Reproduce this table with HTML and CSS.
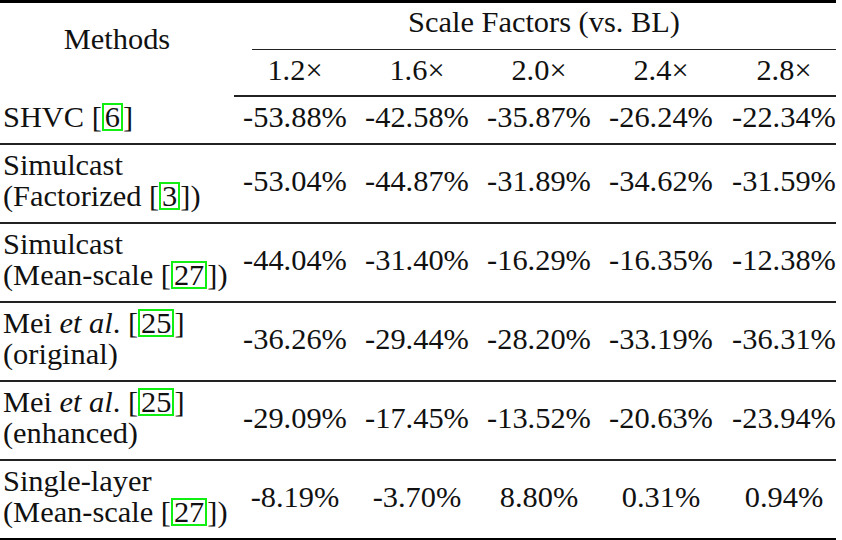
FILE: index.html
```html
<!DOCTYPE html>
<html lang="en">
<head>
<meta charset="utf-8">
<title>Scale Factors table</title>
<link rel="stylesheet" href="styles.css">
</head>
<body>
<table class="results">
  <colgroup>
    <col class="c-method">
    <col class="c-num">
    <col class="c-num">
    <col class="c-num">
    <col class="c-num">
    <col class="c-last">
  </colgroup>
  <thead>
    <tr class="h1">
      <th class="methods" rowspan="2">Methods</th>
      <th class="scale" colspan="5"><div class="scale-label">Scale Factors (vs. BL)</div></th>
    </tr>
    <tr class="h2">
      <th>1.2×</th>
      <th>1.6×</th>
      <th>2.0×</th>
      <th>2.4×</th>
      <th class="last">2.8×</th>
    </tr>
  </thead>
  <tbody>
    <tr>
      <td class="name">SHVC [<span class="cite">6</span>]</td>
      <td>-53.88%</td><td>-42.58%</td><td>-35.87%</td><td>-26.24%</td><td class="last">-22.34%</td>
    </tr>
    <tr>
      <td class="name">Simulcast<br>(Factorized [<span class="cite">3</span>])</td>
      <td>-53.04%</td><td>-44.87%</td><td>-31.89%</td><td>-34.62%</td><td class="last">-31.59%</td>
    </tr>
    <tr>
      <td class="name">Simulcast<br>(Mean-scale [<span class="cite">27</span>])</td>
      <td>-44.04%</td><td>-31.40%</td><td>-16.29%</td><td>-16.35%</td><td class="last">-12.38%</td>
    </tr>
    <tr>
      <td class="name">Mei <em>et al</em>. [<span class="cite">25</span>]<br>(original)</td>
      <td>-36.26%</td><td>-29.44%</td><td>-28.20%</td><td>-33.19%</td><td class="last">-36.31%</td>
    </tr>
    <tr>
      <td class="name">Mei <em>et al</em>. [<span class="cite">25</span>]<br>(enhanced)</td>
      <td>-29.09%</td><td>-17.45%</td><td>-13.52%</td><td>-20.63%</td><td class="last">-23.94%</td>
    </tr>
    <tr class="final">
      <td class="name">Single-layer<br>(Mean-scale [<span class="cite">27</span>])</td>
      <td>-8.19%</td><td>-3.70%</td><td>8.80%</td><td>0.31%</td><td class="last">0.94%</td>
    </tr>
  </tbody>
</table>
</body>
</html>
```

FILE: styles.css
```css
html, body {
  margin: 0;
  padding: 0;
  background: #fff;
}

.results {
  border-collapse: collapse;
  table-layout: fixed;
  width: 836px;
  font-family: "Liberation Serif", "Times New Roman", serif;
  font-size: 30.4px;
  line-height: 31px;
  color: #111;
}

.c-method { width: 234px; }
.c-num { width: 122px; }
.c-last { width: 114px; }

.results th,
.results td {
  font-weight: normal;
  text-align: center;
  vertical-align: middle;
  padding: 5px 0 10px 0;
  white-space: nowrap;
}

.results .last {
  padding-left: 10px;
}

/* header */
.h1 th {
  border-top: 3px solid #000;
}

.results th.methods {
  vertical-align: top;
  padding: 21px 0 0 0;
}

.results th.scale {
  padding: 0;
}

.scale-label {
  margin-left: 18px;
  padding: 4px 0 11px 0;
  border-bottom: 1.5px solid #222;
}

.h2 th {
  padding: 5px 0 9px 0;
  border-bottom: 2px solid #222;
}

.h2 th.last {
  padding-left: 10px;
}

/* body */
tbody tr + tr td {
  border-top: 2px solid #222;
}

tbody tr.final td {
  border-bottom: 3px solid #000;
}

.results td.name {
  text-align: left;
  padding-left: 3px;
}

.name em {
  font-style: italic;
}

.cite {
  display: inline-block;
  line-height: 24px;
  padding: 0 1px;
  border: 2px solid #11ee11;
}
```
